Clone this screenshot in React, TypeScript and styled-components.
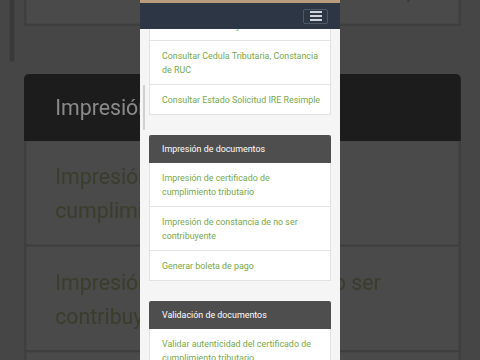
import React from "react";
import styled, { createGlobalStyle, ThemeProvider } from "styled-components";

const GlobalStyle = createGlobalStyle`
  html, body { margin: 0; padding: 0; }
  body { width: 480px; height: 360px; overflow: hidden; font-family: Roboto, "Noto Sans", sans-serif; }
`;

const light = {
  pageBg: "#f5f5f5",
  itemBg: "#ffffff",
  border: "#e2e2e2",
  link: "#76a74a",
  headBg: "#4e4e4e",
  headText: "#ffffff",
  scroll: "#cfcfcf",
};

const dim = {
  pageBg: "#464646",
  itemBg: "#4a4a4a",
  border: "#3f3f3f",
  link: "#393d2c",
  headBg: "#1c1c1c",
  headText: "#8a8a8a",
  scroll: "#3a3a3a",
};

type T = typeof light;

const Stage = styled.div`
  position: relative;
  width: 480px;
  height: 360px;
  overflow: hidden;
  background: #464646;
  display: flex;
  justify-content: center;
`;

const Backdrop = styled.div`
  position: absolute;
  inset: 0;
  overflow: hidden;
  filter: blur(0.7px);
`;

const Zoomed = styled.div`
  width: 200px;
  transform-origin: 0 0;
  transform: translate(2.4px, -250px) scale(2.4);
`;

const Phone = styled.div`
  position: relative;
  width: 200px;
  height: 360px;
  overflow: hidden;
`;

const Page = styled.div<{ theme: T }>`
  position: relative;
  background: ${(p) => p.theme.pageBg};
  padding: 10px 9px 40px 9px;
  display: flex;
  flex-direction: column;
  gap: 20px;
  min-height: 500px;
`;

const ScrollHint = styled.div<{ theme: T }>`
  position: absolute;
  left: 3px;
  top: 85px;
  width: 2px;
  height: 45px;
  border-radius: 1px;
  background: ${(p) => p.theme.scroll};
`;

const Panel = styled.section`
  display: flex;
  flex-direction: column;
`;

const PanelHead = styled.div<{ theme: T }>`
  background: ${(p) => p.theme.headBg};
  color: ${(p) => p.theme.headText};
  font-size: 8.9px;
  line-height: 14px;
  padding: 7px 13px;
  border-radius: 2px 2px 0 0;
`;

const Item = styled.div<{ theme: T }>`
  background: ${(p) => p.theme.itemBg};
  border: 1px solid ${(p) => p.theme.border};
  border-top: none;
  padding: 7.5px 5px 7.5px 12px;
  color: ${(p) => p.theme.link};
  font-size: 8.9px;
  line-height: 14px;
  white-space: pre-line;
  &:first-of-type { border-top: 1px solid ${(p) => p.theme.border}; }
`;

const Navbar = styled.div`
  position: absolute;
  top: 0;
  left: 0;
  right: 0;
  height: 26px;
  border-top: 3px solid #b99c7c;
  background: #2c3644;
  display: flex;
  align-items: center;
  justify-content: flex-end;
  padding-right: 12px;
  z-index: 2;
`;

const Burger = styled.div`
  width: 23px;
  height: 13px;
  border: 1px solid #4f5a69;
  border-radius: 2px;
  display: flex;
  flex-direction: column;
  align-items: center;
  justify-content: center;
  gap: 2.5px;
`;

const BurgerLine = styled.span`
  display: block;
  width: 12px;
  height: 1.5px;
  background: #cdd2d9;
`;

const groups: { title?: string; items: string[] }[] = [
  {
    items: [
      "Consultar Contribuyentes Datos del RUC",
      "Consultar Cedula Tributaria, Constancia\nde RUC",
      "Consultar Estado Solicitud IRE Resimple",
    ],
  },
  {
    title: "Impresión de documentos",
    items: [
      "Impresión de certificado de\ncumplimiento tributario",
      "Impresión de constancia de no ser\ncontribuyente",
      "Generar boleta de pago",
    ],
  },
  {
    title: "Validación de documentos",
    items: [
      "Validar autenticidad del certificado de\ncumplimiento tributario",
      "Validar constancia de no ser\ncontribuyente",
    ],
  },
];

function PageContent() {
  return (
    <Page>
      <ScrollHint />
      {groups.map((g, i) => (
        <Panel key={i}>
          {g.title && <PanelHead>{g.title}</PanelHead>}
          {g.items.map((t) => (
            <Item key={t}>{t}</Item>
          ))}
        </Panel>
      ))}
    </Page>
  );
}

export default function App() {
  return (
    <>
      <GlobalStyle />
      <Stage>
        <Backdrop aria-hidden>
          <ThemeProvider theme={dim}>
            <Zoomed>
              <PageContent />
            </Zoomed>
          </ThemeProvider>
        </Backdrop>
        <ThemeProvider theme={light}>
          <Phone>
            <Navbar>
              <Burger>
                <BurgerLine />
                <BurgerLine />
                <BurgerLine />
              </Burger>
            </Navbar>
            <PageContent />
          </Phone>
        </ThemeProvider>
      </Stage>
    </>
  );
}
